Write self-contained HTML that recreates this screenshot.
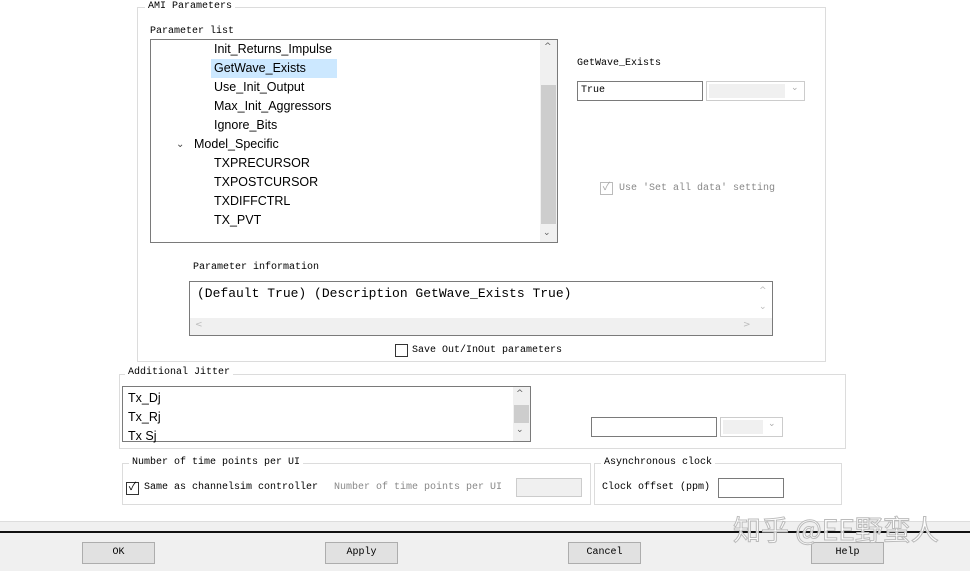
<!DOCTYPE html>
<html><head><meta charset="utf-8"><style>
*{margin:0;padding:0;box-sizing:border-box}
body{width:970px;height:571px;background:#fff;position:relative;overflow:hidden;font-family:"Liberation Mono","Noto Sans CJK SC",monospace;font-size:10px;color:#000}
.a{position:absolute}
.grp{position:absolute;border:1px solid #dcdcdc}
.lg{position:absolute;background:#fff;padding:0 3px;font-size:10px;line-height:12px;white-space:nowrap}
.box{position:absolute;border:1px solid #7a7a7a;background:#fff}
.it{position:absolute;font-family:"Liberation Sans",sans-serif;font-size:12.5px;line-height:19px;white-space:nowrap}
.sb{position:absolute;background:#f0f0f0}
.th{position:absolute;background:#cdcdcd}
.ar{position:absolute;font-size:9px;color:#606060;font-family:"DejaVu Sans",sans-serif}
.btn{position:absolute;width:73px;height:22px;border:1px solid #adadad;background:#e1e1e1;text-align:center;line-height:20px;font-size:10px}
.cb{position:absolute;width:13px;height:13px;border:1px solid #333;background:#fff}
</style></head><body>
<div class="grp" style="left:137px;top:7px;width:689px;height:355px"></div>
<div class="lg" style="left:145px;top:1px">AMI Parameters</div>
<div class="a" style="left:150px;top:26px;line-height:12px">Parameter list</div>
<div class="box" style="left:150px;top:39px;width:408px;height:204px"></div>
<div class="sb" style="left:540px;top:40px;width:17px;height:202px"></div>
<div class="th" style="left:541px;top:85px;width:15px;height:139px"></div>
<div class="ar" style="left:544px;top:42px">^</div>
<div class="ar" style="left:543px;top:228px">⌄</div>
<div class="a" style="left:211px;top:59px;width:126px;height:19px;background:#cce8ff"></div>
<div class="it" style="left:214px;top:40px">Init_Returns_Impulse</div>
<div class="it" style="left:214px;top:59px">GetWave_Exists</div>
<div class="it" style="left:214px;top:78px">Use_Init_Output</div>
<div class="it" style="left:214px;top:97px">Max_Init_Aggressors</div>
<div class="it" style="left:214px;top:116px">Ignore_Bits</div>
<div class="it" style="left:176px;top:135px;font-size:10px;color:#444">&#8964;</div>
<div class="it" style="left:194px;top:135px">Model_Specific</div>
<div class="it" style="left:214px;top:154px">TXPRECURSOR</div>
<div class="it" style="left:214px;top:173px">TXPOSTCURSOR</div>
<div class="it" style="left:214px;top:192px">TXDIFFCTRL</div>
<div class="it" style="left:214px;top:211px">TX_PVT</div>

<div class="a" style="left:577px;top:58px;line-height:12px">GetWave_Exists</div>
<div class="box" style="left:577px;top:81px;width:126px;height:20px;padding:3px 0 0 3px;line-height:12px">True</div>
<div class="a" style="left:706px;top:81px;width:99px;height:20px;border:1px solid #ccc;background:#fff"></div>
<div class="a" style="left:709px;top:84px;width:76px;height:14px;background:#f0f0f0"></div>
<div class="ar" style="left:791px;top:83px;color:#aaa">⌄</div>
<div class="a" style="left:600px;top:182px;width:13px;height:13px;border:1px solid #bbb;color:#aaa;font-size:11px;line-height:11px;text-align:center">✓</div>
<div class="a" style="left:619px;top:183px;color:#888;line-height:12px">Use 'Set all data' setting</div>

<div class="a" style="left:193px;top:262px;line-height:12px">Parameter information</div>
<div class="box" style="left:189px;top:281px;width:584px;height:55px"></div>
<div class="a" style="left:190px;top:318px;width:582px;height:17px;background:#f0f0f0"></div>
<div class="a" style="left:197px;top:287px;font-size:13px;line-height:14px">(Default True) (Description GetWave_Exists True)</div>
<div class="ar" style="left:759px;top:286px;color:#bbb">^</div>
<div class="ar" style="left:759px;top:302px;color:#bbb">⌄</div>
<div class="ar" style="left:195px;top:320px;color:#bbb">&lt;</div>
<div class="ar" style="left:743px;top:320px;color:#bbb">&gt;</div>
<div class="cb" style="left:395px;top:344px"></div>
<div class="a" style="left:412px;top:345px;line-height:12px">Save Out/InOut parameters</div>

<div class="grp" style="left:119px;top:374px;width:727px;height:75px"></div>
<div class="lg" style="left:125px;top:367px">Additional Jitter</div>
<div class="box" style="left:122px;top:386px;width:409px;height:56px"></div>
<div class="sb" style="left:513px;top:387px;width:17px;height:54px"></div>
<div class="th" style="left:514px;top:405px;width:15px;height:18px"></div>
<div class="ar" style="left:516px;top:389px">^</div>
<div class="ar" style="left:516px;top:425px">⌄</div>
<div class="a" style="left:128px;top:389px;font-family:'Liberation Sans Narrow','Liberation Sans',sans-serif;font-size:12.5px;line-height:19px">Tx_Dj<br>Tx_Rj<br>Tx Sj</div>
<div class="box" style="left:591px;top:417px;width:126px;height:20px"></div>
<div class="a" style="left:720px;top:417px;width:63px;height:20px;border:1px solid #ccc"></div>
<div class="a" style="left:723px;top:420px;width:40px;height:14px;background:#f0f0f0"></div>
<div class="ar" style="left:768px;top:419px;color:#aaa">⌄</div>

<div class="grp" style="left:122px;top:463px;width:469px;height:42px"></div>
<div class="lg" style="left:129px;top:457px">Number of time points per UI</div>
<div class="cb" style="left:126px;top:482px;font-size:11px;line-height:11px;text-align:center">✓</div>
<div class="a" style="left:144px;top:482px;line-height:12px">Same as channelsim controller</div>
<div class="a" style="left:334px;top:482px;line-height:12px;color:#888">Number of time points per UI</div>
<div class="a" style="left:516px;top:478px;width:66px;height:19px;border:1px solid #ccc;background:#f0f0f0"></div>
<div class="grp" style="left:594px;top:463px;width:248px;height:42px"></div>
<div class="lg" style="left:601px;top:457px">Asynchronous clock</div>
<div class="a" style="left:602px;top:482px;line-height:12px">Clock offset (ppm)</div>
<div class="box" style="left:718px;top:478px;width:66px;height:20px"></div>

<div class="a" style="left:0;top:521px;width:970px;height:11px;background:#f0f0f0;border-top:1px solid #ddd"></div>
<div class="a" style="left:0;top:531px;width:970px;height:2px;background:#111"></div>
<div class="a" style="left:0;top:533px;width:970px;height:38px;background:#f0f0f0"></div>
<div class="btn" style="left:82px;top:542px">OK</div>
<div class="btn" style="left:325px;top:542px">Apply</div>
<div class="btn" style="left:568px;top:542px">Cancel</div>
<div class="btn" style="left:811px;top:542px">Help</div>
<div class="a" style="left:733px;top:510px;font-family:'Noto Sans CJK SC',sans-serif;font-size:28px;line-height:38px;color:rgba(255,255,255,0.85);-webkit-text-stroke:1px #bbb;white-space:nowrap">知乎 @EE野蛮人</div>
</body></html>
